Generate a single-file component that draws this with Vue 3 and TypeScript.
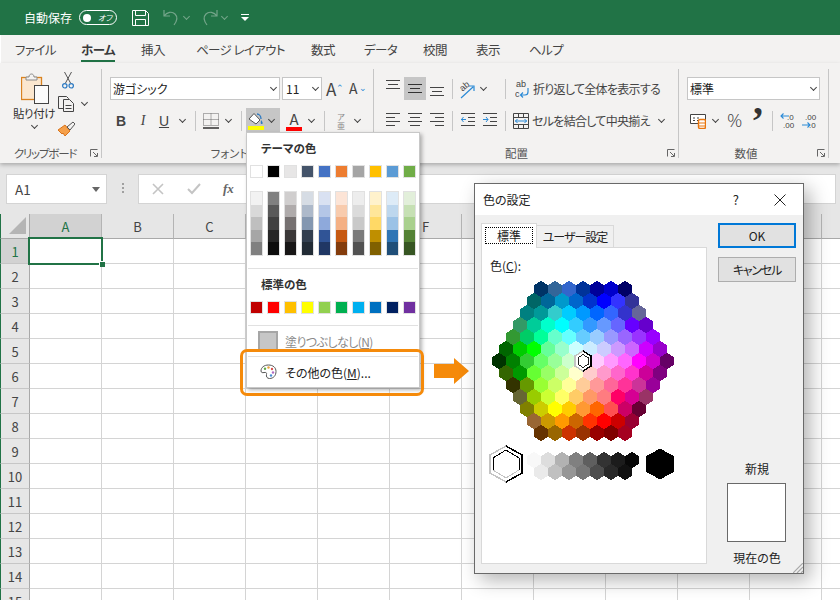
<script setup lang="ts">
import { computed } from 'vue'

const tabs = [
  { label: 'ファイル', width: 66 },
  { label: 'ホーム', width: 60 },
  { label: '挿入', width: 55 },
  { label: 'ページ レイアウト', width: 115 },
  { label: '数式', width: 53 },
  { label: 'データ', width: 59 },
  { label: '校閲', width: 53 },
  { label: '表示', width: 53 },
  { label: 'ヘルプ', width: 40 },
]
const columns = ['A', 'B', 'C', 'D', 'E', 'F', 'G', 'H', 'I', 'J', 'K', 'L']
const rowNumbers = Array.from({ length: 15 }, (_, i) => i + 1)

const themeColors = [
  { base: '#ffffff', shades: ['#f2f2f2', '#d9d9d9', '#bfbfbf', '#a6a6a6', '#808080'] },
  { base: '#000000', shades: ['#808080', '#595959', '#404040', '#262626', '#0d0d0d'] },
  { base: '#e7e6e6', shades: ['#d0cece', '#afabab', '#767171', '#3b3838', '#181717'] },
  { base: '#44546a', shades: ['#d6dce4', '#adb9ca', '#8497b0', '#333f4f', '#222b35'] },
  { base: '#4472c4', shades: ['#d9e1f2', '#b4c6e7', '#8ea9db', '#305496', '#203764'] },
  { base: '#ed7d31', shades: ['#fce4d6', '#f8cbad', '#f4b084', '#c65911', '#833c0c'] },
  { base: '#a5a5a5', shades: ['#ededed', '#dbdbdb', '#c9c9c9', '#7b7b7b', '#525252'] },
  { base: '#ffc000', shades: ['#fff2cc', '#ffe699', '#ffd966', '#bf8f00', '#806000'] },
  { base: '#5b9bd5', shades: ['#ddebf7', '#bdd7ee', '#9bc2e6', '#2f75b5', '#1f4e78'] },
  { base: '#70ad47', shades: ['#e2efda', '#c6e0b4', '#a9d08e', '#548235', '#375623'] },
]
const standardColors = ['#c00000', '#ff0000', '#ffc000', '#ffff00', '#92d050', '#00b050', '#00b0f0', '#0070c0', '#002060', '#7030a0']

const honeycomb = [
  '003366 336699 3366cc 003399 000099 0000cc 000066',
  '006666 006699 0099cc 0066cc 0033cc 0000ff 3333ff 333399',
  '008080 009999 33cccc 00ccff 0099ff 0066ff 3366ff 3333cc 666699',
  '339966 00cc99 00ffcc 00ffff 33ccff 3399ff 6699ff 6666ff 6600ff 6600cc',
  '339933 00cc66 00ff99 66ffcc 66ffff 66ccff 99ccff 9999ff 9966ff 9933ff 9900ff',
  '006600 00cc00 00ff00 66ff99 99ffcc ccffff ccecff ccccff cc99ff cc66ff cc00ff 9900cc',
  '003300 008000 33cc33 66ff66 99ff99 ccffcc ffffff ffccff ff99ff ff66ff ff00ff cc00cc 660066',
  '336600 009900 66ff33 99ff66 ccff99 ffffcc ffcccc ff99cc ff66cc ff33cc cc0099 800080',
  '333300 669900 99ff33 ccff66 ffff99 ffcc99 ff9999 ff6699 ff3399 cc3399 990099',
  '666633 99cc00 ccff33 ffff66 ffcc66 ff9966 ff7c80 ff0066 d60093 993366',
  '808000 cccc00 ffff00 ffcc00 ff9933 ff6600 ff5050 cc0066 660033',
  '996633 cc9900 ff9900 cc6600 ff3300 ff0000 cc0000 990033',
  '663300 996600 cc3300 993300 990000 800000 a50021',
]
const grayTop = 'f8f8f8 dddddd b2b2b2 808080 5f5f5f 333333 1c1c1c 080808'
const grayBottom = 'eaeaea c0c0c0 969696 777777 4d4d4d 292929 111111'

function hexPoints(cx: number, cy: number, rx = 7, ry = 8) {
  return `${cx},${cy - ry} ${cx + rx},${cy - ry / 2} ${cx + rx},${cy + ry / 2} ${cx},${cy + ry} ${cx - rx},${cy + ry / 2} ${cx - rx},${cy - ry / 2}`
}

const hexes = computed(() => {
  const list: Array<{ points: string; fill: string }> = []
  honeycomb.forEach((line, r) => {
    const cells = line.split(' ')
    const startX = 583 - ((cells.length - 1) * 14) / 2
    cells.forEach((c, i) => {
      list.push({ points: hexPoints(startX + i * 14, 289 + r * 12), fill: '#' + c })
    })
  })
  grayTop.split(' ').forEach((c, i) => list.push({ points: hexPoints(534 + i * 14, 460), fill: '#' + c }))
  grayBottom.split(' ').forEach((c, i) => list.push({ points: hexPoints(541 + i * 14, 472), fill: '#' + c }))
  return list
})
</script>

<template>
  <div class="app">
    <div class="titlebar">
      <span class="autosave">自動保存</span>
      <span class="toggle"><i class="knob"></i><em>オフ</em></span>
      <svg class="qa save" width="17" height="16" viewBox="0 0 17 16" fill="none" stroke="#fff">
        <path d="M.5.5h13l3 3v12H.5zM3.5.5v5h10v-5M3.5 15.5v-6h10v6" />
      </svg>
      <svg class="qa undo" width="17" height="17" viewBox="0 0 17 17" fill="none" stroke="#74a58a" stroke-width="1.2">
        <path d="M1 1v6h6M1 7c3-4 8-5 11-2 3 3 2 7-1 11" />
      </svg>
      <span class="chev light"></span>
      <svg class="qa redo" width="17" height="17" viewBox="0 0 17 17" fill="none" stroke="#74a58a" stroke-width="1.2">
        <path d="M16 1v6h-6M16 7c-3-4-8-5-11-2-3 3-2 7 1 11" />
      </svg>
      <span class="chev light"></span>
      <svg class="qa more" width="8" height="7" viewBox="0 0 8 7">
        <path d="M0 0h8v1H0zM0 3h8L4 7z" fill="#fff" />
      </svg>
    </div>

    <div class="tabs">
      <div v-for="tab in tabs" :key="tab.label" class="tab" :style="{ width: tab.width + 'px' }">
        <span :class="{ active: tab.label === 'ホーム' }">{{ tab.label }}</span>
      </div>
    </div>

    <div class="ribbon">
      <section class="group g-clip">
        <div class="clip-top">
          <div class="paste">
            <svg width="29" height="33" viewBox="0 0 29 33">
              <rect x=".5" y="4.500" width="20" height="22" fill="#fbe7cf" stroke="#d9821f" stroke-width="1.300" />
              <path d="M5 7V4h3c0-4 5-4 5 0h3v3z" fill="#f3f2f1" stroke="#8a8a8a" />
              <rect x="13.500" y="12.500" width="14" height="18" fill="#fbfbfb" stroke="#444" />
            </svg>
            <span class="paste-label">貼り付け</span>
            <span class="chev"></span>
          </div>
          <div class="clip-tools">
            <svg class="cut" width="12" height="17" viewBox="0 0 12 17" fill="none">
              <path d="M2.500 0 8.500 11M9.500 0 3.500 11" stroke="#555" />
              <circle cx="2.800" cy="13.800" r="2.200" stroke="#2b79c2" stroke-width="1.200" />
              <circle cx="9.200" cy="13.800" r="2.200" stroke="#2b79c2" stroke-width="1.200" />
            </svg>
            <div class="copy-row">
              <svg width="17" height="16" viewBox="0 0 17 16" fill="#f3f2f1" stroke="#444">
                <path d="M.5.500h8l2 2v10H.5z" />
                <path d="M5.500 3.500h6l4 4v8h-10zM7.500 9.500h6M7.500 12.500h6" />
              </svg>
              <span class="chev"></span>
            </div>
            <svg class="brush" width="17" height="16" viewBox="0 0 17 16">
              <path d="M0 9 7 4l5 6-5 5-2-3-1 1z" fill="#f5a04a" stroke="#d9731a" />
              <path d="m9 6 6-5 2 2-5 6z" fill="#f3f2f1" stroke="#555" />
            </svg>
          </div>
        </div>
        <div class="glabel">
          <span class="gtext tight">クリップボード</span>
          <svg class="launch" width="8" height="8" viewBox="0 0 8 8" fill="none" stroke="#666"><path d="M.5 7.500v-7h7M3 3l4 4M7.500 4v3.500H4" /></svg>
        </div>
      </section>

      <section class="group g-font">
        <div class="row r1">
          <div class="combo w170"><span>游ゴシック</span><span class="chev"></span></div>
          <div class="combo w40"><span>11</span><span class="chev"></span></div>
          <span class="grow-a up">A<i>⌃</i></span>
          <span class="grow-a down">A<i>⌄</i></span>
        </div>
        <div class="row r2">
          <span class="fmt bold">B</span>
          <span class="fmt italic">I</span>
          <span class="fmt under">U</span>
          <span class="chev c1"></span>
          <span class="sep s6"></span>
          <svg class="ml7" width="16" height="16" viewBox="0 0 16 16" fill="none" stroke="#666" stroke-dasharray="1 1">
            <path d="M.5.500h15v12H.5zM8 .5v12M.5 6.500h15" />
            <path d="M0 15h16" stroke="#222" stroke-width="1.400" stroke-dasharray="none" />
          </svg>
          <span class="chev c2"></span>
          <span class="sep s6"></span>
          <div class="fill-btn">
            <svg width="16" height="18" viewBox="0 0 16 18">
              <path d="M1 7 6 1.500 12 8l-4 4z" fill="#fff" stroke="#555" />
              <path d="M13 8c2 2 2 4 1 4-2 0-1-2-1-4z" fill="#2b79c2" />
              <path d="M9 2c2 0 4 2 4 5" stroke="#2b79c2" fill="none" stroke-width="1.300" />
              <rect y="14" width="16" height="4" fill="#ffff00" />
            </svg>
            <span class="chev c3"></span>
          </div>
          <span class="font-color">A<i></i></span>
          <span class="chev c2"></span>
          <span class="sep s6"></span>
          <span class="furi">ア<br />亜</span>
          <span class="chev c4"></span>
        </div>
        <div class="glabel">
          <span class="gtext pr16">フォント</span>
        </div>
      </section>

      <section class="group g-align">
        <div class="row r1">
          <svg class="lines" width="14" height="23" viewBox="0 0 14 23" stroke="#444"><path d="M0 3.500h14M2 7.500h10M0 11.500h14" /></svg>
          <span class="active-align">
            <svg class="lines" width="14" height="23" viewBox="0 0 14 23" stroke="#333"><path d="M0 7.500h14M2 11.500h10M0 15.500h14" /></svg>
          </span>
          <svg class="lines ml4" width="14" height="23" viewBox="0 0 14 23" stroke="#444"><path d="M0 10.500h14M2 14.500h10M0 18.500h14" /></svg>
          <span class="sep s8"></span>
          <svg class="ml7" width="15" height="20" viewBox="0 0 15 20">
            <text x="0" y="10" font-size="9" fill="#444" transform="rotate(-40 5 8)" class="svg-text">ab</text>
            <path d="M1 19 13 8M9 7h5v5" stroke="#2b8ad6" fill="none" stroke-width="1.200" />
          </svg>
          <span class="chev c5"></span>
          <span class="sep s15"></span>
          <svg class="ml9" width="15" height="20" viewBox="0 0 15 20">
            <text x="1" y="8" font-size="9" fill="#444" class="svg-text">ab</text>
            <text x="0" y="18" font-size="9" fill="#444" class="svg-text">c</text>
            <path d="M13 9v4c0 2-1 3-3 3H6M8 13.500 5.500 16 8 18.500" stroke="#2b8ad6" fill="none" stroke-width="1.200" />
          </svg>
          <span class="wide-label">折り返して全体を表示する</span>
        </div>
        <div class="row r2">
          <svg class="lines" width="14" height="25" viewBox="0 0 14 25" stroke="#444"><path d="M0 5.500h14M0 9.500h9M0 13.500h14M0 17.500h9" /></svg>
          <svg class="lines ml8" width="14" height="25" viewBox="0 0 14 25" stroke="#444"><path d="M0 5.500h14M2 9.500h10M0 13.500h14M2 17.500h10" /></svg>
          <svg class="lines ml8" width="14" height="25" viewBox="0 0 14 25" stroke="#444"><path d="M0 5.500h14M5 9.500h9M0 13.500h14M5 17.500h9" /></svg>
          <span class="sep s8"></span>
          <svg class="lines ml8" width="14" height="25" viewBox="0 0 14 25" fill="none" stroke="#444">
            <path d="M0 5.500h14M7 9.500h7M7 13.500h7M0 17.500h14" />
            <path d="M5 11.500H0M2.500 9 .5 11.500l2 2.500" stroke="#2b8ad6" />
          </svg>
          <svg class="lines ml8" width="14" height="25" viewBox="0 0 14 25" fill="none" stroke="#444">
            <path d="M0 5.500h14M7 9.500h7M7 13.500h7M0 17.500h14" />
            <path d="M0 11.500h5M3 9l2 2.500L3 14" stroke="#2b8ad6" />
          </svg>
          <span class="sep s8"></span>
          <svg class="ml7" width="16" height="16" viewBox="0 0 16 16" fill="none" stroke="#444">
            <path d="M.5.500h15v15H.5zM.5 4.500h15M.5 11.500h15M5.500.5v4M10.500.5v4M5.500 11.500v4M10.500 11.500v4" />
            <path d="M2 8h12M4.500 6 2.500 8l2 2M11.500 6l2 2-2 2" stroke="#2b8ad6" />
          </svg>
          <span class="wide-label">セルを結合して中央揃え</span>
          <span class="chev"></span>
        </div>
        <div class="glabel">
          <span class="gtext pr18">配置</span>
          <svg class="launch" width="8" height="8" viewBox="0 0 8 8" fill="none" stroke="#666"><path d="M.5 7.500v-7h7M3 3l4 4M7.500 4v3.500H4" /></svg>
        </div>
      </section>

      <section class="group g-num">
        <div class="row r1">
          <div class="combo w133"><span>標準</span><span class="chev"></span></div>
        </div>
        <div class="row r2">
          <svg class="ml3" width="16" height="16" viewBox="0 0 16 16">
            <path d="M.5 1.500h15v9H.5z" fill="#fff" stroke="#444" />
            <path d="M3 5h2M3 7.500h2M7 5h2M7 7.500h2" stroke="#444" />
            <rect x="8.500" y="6.500" width="7" height="9" rx="1.500" fill="#fff" stroke="#e8760e" stroke-width="1.400" />
            <path d="M8.500 10h7M8.500 13h7" stroke="#e8760e" />
          </svg>
          <span class="chev c2"></span>
          <span class="percent">%</span>
          <span class="comma">,</span>
          <span class="sep s10"></span>
          <svg class="ml7" width="15" height="16" viewBox="0 0 15 16">
            <text x="7" y="7" font-size="8" fill="#444" class="svg-text">.0</text>
            <text x="3" y="15" font-size="8" fill="#444" class="svg-text">.00</text>
            <path d="M9 3H1M3.500 .5 1 3l2.500 2.500" stroke="#2b8ad6" fill="none" stroke-width="1.100" />
          </svg>
          <svg class="ml7" width="15" height="16" viewBox="0 0 15 16">
            <text x="3" y="7" font-size="8" fill="#444" class="svg-text">.00</text>
            <text x="7" y="15" font-size="8" fill="#444" class="svg-text">.0</text>
            <path d="M0 12h8M5.500 9.500 8 12l-2.500 2.500" stroke="#2b8ad6" fill="none" stroke-width="1.100" />
          </svg>
        </div>
        <div class="glabel">
          <span class="gtext pr12">数値</span>
          <svg class="launch" width="8" height="8" viewBox="0 0 8 8" fill="none" stroke="#666"><path d="M.5 7.500v-7h7M3 3l4 4M7.500 4v3.500H4" /></svg>
        </div>
      </section>
    </div>

    <div class="formula">
      <div class="namebox"><span>A1</span><i class="tri"></i></div>
      <span class="dots"><i></i><i></i><i></i></span>
      <div class="fbox">
        <svg width="12" height="12" viewBox="0 0 12 12" stroke="#c4c4c4" stroke-width="1.600"><path d="M1 1l10 10M11 1 1 11" /></svg>
        <svg class="check" width="14" height="12" viewBox="0 0 14 12" fill="none" stroke="#c4c4c4" stroke-width="2"><path d="m1 6 4 4 8-9" /></svg>
        <span class="fx">fx</span>
      </div>
    </div>

    <div class="sheet">
      <div class="head corner">
        <svg width="18" height="18" viewBox="0 0 18 18"><path d="M17 0v17H0z" fill="#b5b5b5" /></svg>
      </div>
      <div v-for="c in columns" :key="c" class="head col" :class="{ sel: c === 'A' }">{{ c }}</div>
      <template v-for="r in rowNumbers" :key="r">
        <div class="head rownum" :class="{ sel: r === 1 }">{{ r }}</div>
        <div v-for="c in columns" :key="c" class="cell"></div>
      </template>
      <div class="selection"><i></i></div>
    </div>

    <div class="popup">
      <div class="ptitle">テーマの色</div>
      <div class="swatches">
        <span v-for="t in themeColors" :key="t.base" class="sw" :style="{ background: t.base }"></span>
      </div>
      <div class="shades">
        <div v-for="t in themeColors" :key="t.base" class="shade-col">
          <span v-for="s in t.shades" :key="s" :style="{ background: s }"></span>
        </div>
      </div>
      <div class="psep sep-a"></div>
      <div class="ptitle">標準の色</div>
      <div class="swatches">
        <span v-for="c in standardColors" :key="c" class="sw" :style="{ background: c }"></span>
      </div>
      <div class="psep sep-b"></div>
      <div class="nofill">
        <span class="nofill-icon"></span>
        <span class="nofill-text">塗りつぶしなし(<u>N</u>)</span>
      </div>
      <div class="psep sep-c"></div>
      <div class="more-colors">
        <svg width="17" height="16" viewBox="0 0 17 16">
          <path d="M8.500 1C4 1 1 3.500 1 7c0 1.500 1.500 2 3 1.500 2-.5 3 .5 2.500 2-.5 2 .5 4 3 4 4 0 6.500-3 6.500-7S13 1 8.500 1z" fill="#fff" stroke="#555" />
          <circle cx="5" cy="4.800" r="1.200" fill="#5fa84a" />
          <circle cx="8.500" cy="3.500" r="1.200" fill="#e8a33a" />
          <circle cx="12" cy="5" r="1.200" fill="#d9534f" />
          <circle cx="13" cy="8.500" r="1.200" fill="#b06ac4" />
          <circle cx="11" cy="11.500" r="1.200" fill="#4a8fd6" />
        </svg>
        <span>その他の色(<u>M</u>)...</span>
      </div>
    </div>

    <div class="highlight"></div>
    <svg class="arrow" width="35" height="26" viewBox="0 0 35 26"><path d="M0 6h20V0l15 13-15 13v-6H0z" fill="#f58a0a" /></svg>

    <div class="dialog">
      <div class="dtitle">
        <span class="dname">色の設定</span>
        <span class="help">?</span>
        <svg class="close" width="12" height="12" viewBox="0 0 12 12" stroke="#222"><path d="M.5.500l11 11M11.500.5l-11 11" /></svg>
      </div>
      <div class="dbody">
        <div class="dleft">
          <div class="dtabs">
            <div class="dtab on"><span>標準</span></div>
            <div class="dtab">ユーザー設定</div>
          </div>
          <div class="dpanel">
            <div class="color-label">色(<u>C</u>):</div>
            <svg class="comb" width="224" height="214" viewBox="482 274 224 214" shape-rendering="crispEdges">
              <polygon v-for="(h, i) in hexes" :key="i" :points="h.points" :fill="h.fill" />
              <polygon :points="hexPoints(583, 361, 8, 10)" fill="#fff" stroke="#c4c4c4" stroke-width="1.500" />
              <polyline points="583,351 591,356 591,366 583,371" fill="none" stroke="#000" stroke-width="1.500" />
              <polygon :points="hexPoints(583, 361, 5, 6.500)" fill="#fff" stroke="#222" />
              <polygon :points="hexPoints(506, 464, 16, 18)" fill="#fff" stroke="#c4c4c4" stroke-width="1.500" />
              <polyline points="506,446 522,455 522,473 506,482" fill="none" stroke="#000" stroke-width="1.500" />
              <polyline points="493,470 493,458 506,450 519,458 519,470" fill="none" stroke="#000" />
              <polyline points="493,470 506,478 519,470" fill="none" stroke="#c4c4c4" />
              <polygon :points="hexPoints(660, 464, 14, 15.500)" fill="#000" />
            </svg>
          </div>
        </div>
        <div class="dright">
          <button class="dbtn ok">OK</button>
          <button class="dbtn cancel">キャンセル</button>
          <div class="new-label">新規</div>
          <div class="preview"></div>
          <div class="cur-label">現在の色</div>
        </div>
      </div>
      <svg class="grip" width="10" height="10" viewBox="0 0 10 10" stroke="#a8a8a8" stroke-width="1.200"><path d="M0 10 10 0M4 10l6-6M8 10l2-2" /></svg>
    </div>
  </div>
</template>

<style scoped>
.app {
  position: relative;
  width: 840px;
  height: 600px;
  overflow: hidden;
  background: #fff;
  font-family: "Noto Sans CJK JP", "Noto Sans", sans-serif;
  font-feature-settings: "palt";
  font-size: 12px;
  color: #333;
}

.titlebar {
  display: flex;
  align-items: center;
  height: 35px;
  padding-left: 24px;
  box-sizing: border-box;
  background: #217346;
  color: #fff;
}
.autosave { font-size: 12px; width: 55px; white-space: nowrap; }
.toggle {
  display: flex;
  align-items: center;
  width: 38px;
  height: 15px;
  box-sizing: border-box;
  border: 1px solid #fff;
  border-radius: 8px;
  padding-left: 3px;
}
.knob { width: 8px; height: 8px; border-radius: 50%; background: #fff; }
.toggle em { font-size: 8px; margin-left: 7px; line-height: 1; }
.save { margin-left: 15px; }
.undo { margin-left: 14px; }
.redo { margin-left: 9px; }
.more { margin-left: 11px; }

.chev {
  display: inline-flex;
  justify-content: center;
  flex: none;
  width: 14px;
  height: 10px;
}
.chev::before {
  content: '';
  width: 4px;
  height: 4px;
  margin-top: 1px;
  border-right: 1px solid #444;
  border-bottom: 1px solid #444;
  transform: rotate(45deg);
}
.chev.light { width: 12px; }
.chev.light::before { border-color: #74a58a; }

.tabs {
  display: flex;
  height: 28px;
  padding-left: 14px;
  background: #f3f2f1;
  border-left: 1px solid #fff;
}
.tab {
  flex: none;
  font-size: 12.500px;
  letter-spacing: -0.6px;
  line-height: 30px;
  color: #444;
  white-space: nowrap;
}
.tab span { display: inline-block; position: relative; }
.tab span.active {
  font-weight: 700;
  color: #3a3a3a;
}
.tab span.active::after {
  content: '';
  position: absolute;
  left: 0;
  right: 0;
  top: 25px;
  height: 2px;
  background: #217346;
}

.ribbon {
  position: relative;
  z-index: 1;
  display: flex;
  height: 100px;
  background: #f3f2f1;
  box-shadow: 0 2px 4px rgba(0, 0, 0, 0.25);
}
.group {
  display: flex;
  flex-direction: column;
  box-sizing: border-box;
  height: 89px;
  margin-top: 6px;
  padding-top: 8px;
  border-right: 1px solid #c6c6c6;
}
.g-clip { width: 102px; }
.g-font { width: 272px; padding-left: 8px; }
.g-align { width: 305px; padding-left: 12px; }
.g-num { width: 150px; padding-left: 8px; }

.clip-top { display: flex; margin-top: -4px; height: 65px; }
.paste {
  display: flex;
  flex-direction: column;
  align-items: center;
  width: 44px;
  margin-left: 12px;
  margin-right: 1px;
}
.paste svg { margin-left: 3px; }
.paste-label { font-size: 11.500px; letter-spacing: -0.4px; line-height: 15px; white-space: nowrap; }
.paste .chev { margin-top: 1px; }
.clip-tools { display: flex; flex-direction: column; margin-left: 1px; }
.cut { margin-left: 4px; margin-top: -1px; }
.copy-row { display: flex; align-items: center; margin-top: 7px; }
.copy-row .chev { margin-left: 2px; }
.brush { margin-top: 9px; }

.glabel {
  display: flex;
  align-items: center;
  height: 16px;
  margin-top: auto;
  margin-bottom: -3px;
}
.gtext { flex: 1; text-align: center; font-size: 11.500px; color: #555; white-space: nowrap; }
.tight { letter-spacing: -1.200px; }
.launch { flex: none; margin-right: 3px; }
.pr16 { padding-right: 24px; }
.pr18 { padding-right: 20px; }
.pr12 { padding-right: 12px; }

.row { display: flex; align-items: center; flex: none; }
.r1 { height: 23px; }
.r2 { height: 25px; margin-top: 8px; }

.combo {
  display: flex;
  align-items: center;
  justify-content: space-between;
  height: 23px;
  box-sizing: border-box;
  border: 1px solid #c6c6c6;
  background: #fff;
  padding-left: 2px;
  font-size: 12px;
  color: #222;
}
.combo .chev { width: 11px; }
.w170 { width: 170px; }
.w40 { width: 40px; margin-left: 2px; padding-left: 3px; }
.w133 { width: 133px; }
.grow-a { position: relative; font-size: 17px; line-height: 23px; width: 16px; color: #444; }
.grow-a i { position: absolute; left: 10px; top: -1px; font-size: 9px; font-style: normal; color: #2b8ad6; }
.grow-a.up { margin-left: 4px; }
.grow-a.down { margin-left: 7px; font-size: 14px; }
.fmt { text-align: center; font-size: 14px; color: #444; font-family: "Liberation Sans", sans-serif; }
.bold { width: 22px; font-weight: 700; }
.italic { width: 22px; font-style: italic; font-family: "Liberation Serif", serif; }
.under { width: 20px; text-decoration: underline; }
.c1 { margin-left: 1px; }
.c2 { margin-left: 2px; }
.c3 { margin-left: 2px; width: 11px; }
.c4 { margin-left: 4px; }
.c5 { margin-left: 1px; }
.sep { flex: none; width: 1px; height: 20px; background: #c6c6c6; }
.s6 { margin-left: 6px; }
.s8 { margin-left: 8px; }
.s10 { margin-left: 10px; }
.s15 { margin-left: 15px; }
.ml3 { margin-left: 3px; }
.ml4 { margin-left: 4px; }
.ml7 { margin-left: 7px; }
.ml8 { margin-left: 8px; }
.ml9 { margin-left: 9px; }
.lines { flex: none; }
.fill-btn {
  display: flex;
  align-items: center;
  box-sizing: border-box;
  width: 34px;
  height: 25px;
  margin-left: 4px;
  padding-left: 2px;
  background: #c6c6c6;
}
.font-color {
  display: flex;
  flex-direction: column;
  align-items: center;
  width: 16px;
  margin-left: 6px;
  font-size: 15px;
  line-height: 15px;
  color: #444;
}
.font-color i { width: 16px; height: 4px; background: #ff0000; margin-top: 1px; }
.furi { width: 10px; margin-left: 11px; font-size: 8px; line-height: 9px; color: #888; text-align: center; }
.active-align {
  display: flex;
  justify-content: center;
  width: 22px;
  height: 23px;
  margin-left: 4px;
  background: #c6c6c6;
}
.wide-label { margin-left: 3px; font-size: 12px; letter-spacing: -0.7px; color: #444; white-space: nowrap; width: 122px; }
.svg-text { font-family: "Liberation Sans", sans-serif; }
.percent { width: 16px; margin-left: 5px; font-size: 19px; font-weight: 300; line-height: 25px; font-family: "Open Sans", sans-serif; color: #444; }
.comma {
  align-self: flex-start;
  width: 9px;
  margin-left: 10px;
  margin-top: -20px;
  font-size: 40px;
  font-weight: 700;
  line-height: 25px;
  font-family: "Liberation Serif", serif;
  color: #333;
}

.formula {
  display: flex;
  align-items: flex-start;
  box-sizing: border-box;
  height: 51px;
  padding: 11px 0 0 6px;
  background: #e6e6e6;
}
.namebox {
  display: flex;
  align-items: center;
  justify-content: space-between;
  box-sizing: border-box;
  width: 101px;
  height: 30px;
  padding: 0 6px 0 8px;
  background: #fff;
  border: 1px solid #d4d4d4;
  font-size: 13.500px;
  color: #444;
}
.tri { border: 4px solid transparent; border-top: 5px solid #666; margin-top: 4px; }
.dots { display: flex; flex-direction: column; gap: 2px; width: 3px; margin: 9px 13px 0 15px; }
.dots i { width: 2px; height: 2px; background: #a0a0a0; }
.fbox {
  display: flex;
  align-items: center;
  box-sizing: border-box;
  width: 698px;
  height: 30px;
  padding-left: 13px;
  background: #fff;
  border: 1px solid #d4d4d4;
}
.check { margin-left: 23px; }
.fx { margin-left: 22px; font-family: "Liberation Serif", serif; font-style: italic; font-weight: 700; font-size: 13px; color: #666; }

.sheet {
  position: relative;
  display: grid;
  grid-template-columns: 30px repeat(12, 72px);
  grid-auto-rows: 25px;
}
.head {
  box-sizing: border-box;
  background: #e6e6e6;
  display: flex;
  align-items: center;
  justify-content: center;
  font-size: 13px;
  color: #444;
}
.corner {
  border-left: 1px solid #217346;
  border-right: 1px solid #a9a9a9;
  border-bottom: 1px solid #a9a9a9;
  align-items: flex-end;
  justify-content: flex-end;
  padding: 0 2px 3px 0;
}
.col {
  border-right: 1px solid #b4b4b4;
  border-bottom: 1px solid #a9a9a9;
}
.col.sel, .rownum.sel { background: #d2d2d2; color: #217346; }
.rownum {
  border-left: 1px solid #217346;
  border-right: 1px solid #a9a9a9;
  border-bottom: 1px solid #c6c6c6;
}
.cell {
  box-sizing: border-box;
  border-right: 1px solid #d4d4d4;
  border-bottom: 1px solid #d4d4d4;
}
.selection {
  position: absolute;
  left: 28px;
  top: 23px;
  box-sizing: border-box;
  width: 75px;
  height: 28px;
  border: 2px solid #217346;
}
.selection i {
  position: absolute;
  right: -4px;
  bottom: -4px;
  width: 5px;
  height: 5px;
  background: #217346;
  border: 1px solid #fff;
  border-width: 1px 0 0 1px;
}

.popup {
  position: absolute;
  z-index: 2;
  left: 246px;
  top: 132px;
  box-sizing: border-box;
  width: 174px;
  height: 256px;
  background: #fff;
  border: 1px solid #c8c8c8;
  box-shadow: 2px 2px 4px rgba(0, 0, 0, 0.3);
}
.ptitle {
  padding: 7px 0 0 14px;
  font-size: 11.500px;
  font-weight: 700;
  line-height: 16px;
  color: #333;
}
.swatches { display: flex; gap: 4px; margin: 9px 0 0 3px; }
.sw { width: 13px; height: 13px; box-sizing: border-box; border: 1px solid #e1e1e1; }
.shades { display: flex; gap: 4px; margin: 13px 0 0 3px; }
.shade-col { display: flex; flex-direction: column; width: 13px; height: 65px; box-sizing: border-box; border: 1px solid #e1e1e1; }
.shade-col span { flex: 1; }
.psep { height: 1px; margin: 0 1px; background: #e1e1e1; }
.sep-a { margin-top: 12px; }
.sep-b { margin-top: 11px; }
.sep-c { margin-top: 5px; }
.nofill { display: flex; align-items: center; gap: 7px; margin: 5px 0 0 11px; height: 20px; color: #8a8a8a; }
.nofill-text { letter-spacing: -0.6px; white-space: nowrap; }
.nofill-icon { width: 20px; height: 20px; box-sizing: border-box; background: #c6c6c6; border: 2px solid #a6a6a6; }
.more-colors { display: flex; align-items: center; gap: 8px; height: 30px; padding-left: 13px; color: #222; white-space: nowrap; }

.highlight {
  position: absolute;
  z-index: 3;
  left: 240px;
  top: 349px;
  box-sizing: border-box;
  width: 184px;
  height: 47px;
  border: 3px solid #f58a0a;
  border-radius: 7px;
}
.arrow { position: absolute; z-index: 3; left: 434px; top: 358px; }

.dialog {
  position: absolute;
  z-index: 4;
  left: 474px;
  top: 183px;
  box-sizing: border-box;
  width: 330px;
  height: 391px;
  display: flex;
  flex-direction: column;
  background: #f0f0f0;
  border: 1px solid #696969;
  box-shadow: 6px 6px 18px rgba(0, 0, 0, 0.3);
}
.dtitle {
  display: flex;
  align-items: center;
  flex: none;
  height: 31px;
  padding: 0 17px 0 8px;
  background: #fff;
  font-size: 12px;
  color: #222;
}
.dname { flex: 1; white-space: nowrap; }
.help { font-size: 13px; }
.close { margin-left: 35px; flex: none; }
.dbody { display: flex; flex: 1; min-height: 0; padding: 8px 7px 9px 6px; }
.dleft { display: flex; flex-direction: column; width: 226px; }
.dtabs { display: flex; align-items: flex-end; height: 24px; flex: none; }
.dtab {
  box-sizing: border-box;
  width: 77px;
  height: 22px;
  text-align: center;
  font-size: 12px;
  letter-spacing: -1px;
  line-height: 21px;
  color: #222;
  white-space: nowrap;
  border: 1px solid #d9d9d9;
  border-bottom: none;
  border-left: none;
}
.dtab.on {
  position: relative;
  z-index: 1;
  width: 56px;
  height: 25px;
  margin-bottom: -1px;
  padding: 3px;
  letter-spacing: 0;
  background: #fff;
  border-left: 1px solid #d9d9d9;
}
.dtab.on span {
  display: block;
  height: 17px;
  line-height: 15px;
  box-sizing: border-box;
  border: 1px dotted #000;
}
.dpanel {
  flex: 1;
  box-sizing: border-box;
  background: #fff;
  border: 1px solid #d9d9d9;
}
.color-label { padding: 10px 0 0 8px; font-size: 12px; line-height: 16px; color: #222; }
.comb { display: block; }
.dright { display: flex; flex-direction: column; align-items: center; width: 78px; margin-left: 11px; }
.dbtn {
  flex: none;
  width: 78px;
  height: 25px;
  padding: 0;
  box-sizing: border-box;
  background: #e1e1e1;
  border: 1px solid #adadad;
  font-family: inherit;
  font-feature-settings: inherit;
  font-size: 12px;
  color: #222;
}
.ok { border: 2px solid #0078d7; }
.cancel { margin-top: 9px; letter-spacing: -1.200px; }
.new-label { margin-top: 179px; font-size: 12px; line-height: 16px; color: #222; }
.preview { width: 59px; height: 59px; margin: 6px 1px 0 0; flex: none; box-sizing: border-box; background: #fff; border: 1px solid #696969; }
.cur-label { margin-top: 8px; font-size: 12px; line-height: 16px; color: #222; white-space: nowrap; }
.grip { position: absolute; right: 0; bottom: 0; }
</style>

<style>
html, body { margin: 0; overflow: hidden; }
</style>
